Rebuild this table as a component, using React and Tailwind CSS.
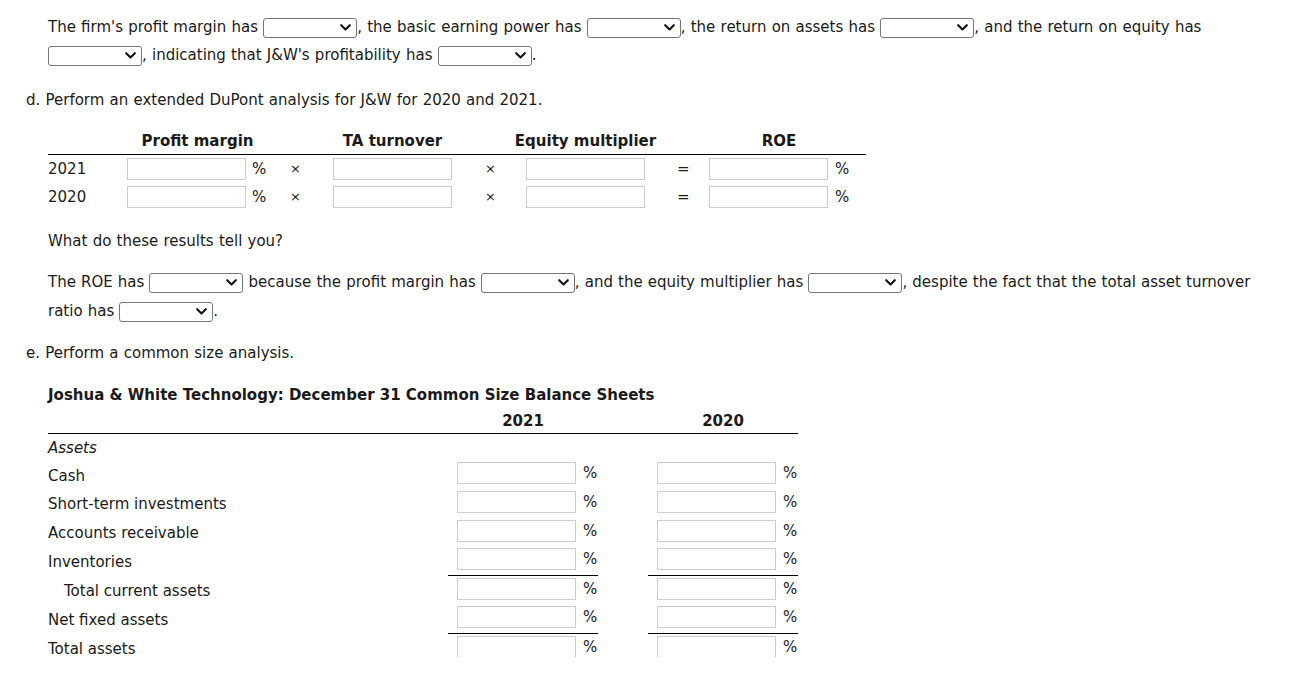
import React from 'react';

function Select() {
  return (
    <span className="inline-flex align-middle items-center justify-end w-[94px] h-[20px] pr-[5px] border border-[#767676] rounded-[3px] bg-white">
      <svg width="11" height="7" viewBox="0 0 11 7" fill="none">
        <path d="M1.2 1.2 L5.5 5.5 L9.8 1.2" stroke="#111" strokeWidth="2.1" strokeLinecap="round" strokeLinejoin="round" />
      </svg>
    </span>
  );
}

function Box() {
  return <input type="text" readOnly className="block w-[119px] h-[22px] border border-[#cccccc] bg-white outline-none" />;
}

const rows = [
  { label: 'Cash', pt: 'pt-[3px]', lpt: 'pt-[6px] leading-[22px]', h: 'h-[29px]' },
  { label: 'Short-term investments', pt: 'pt-[3px]', lpt: 'pt-[5px] leading-[22px]', h: 'h-[29px]' },
  { label: 'Accounts receivable', pt: 'pt-[3px]', lpt: 'pt-[5px] leading-[22px]', h: 'h-[29px]' },
  { label: 'Inventories', pt: 'pt-[2px]', lpt: 'pt-[5px] leading-[22px]', h: 'h-[30px]', line: true },
  { label: 'Total current assets', pt: 'pt-[2px]', lpt: 'pt-[4px] leading-[22px]', h: 'h-[28px]', indent: true },
  { label: 'Net fixed assets', pt: 'pt-[2px]', lpt: 'pt-[5px] leading-[22px]', h: 'h-[30px]', line: true },
  { label: 'Total assets', pt: 'pt-[2px]', lpt: 'pt-[8px] leading-[15px]', h: 'h-[28px]' },
];

export default function App() {
  return (
    <div className="w-[1305px] h-[657px] overflow-hidden bg-white text-[15px] text-[#1a1a1a] font-['Verdana','DejaVu_Sans',sans-serif]">
      {/* part c wrap-up */}
      <div className="pl-[48px] pt-[13px] leading-[28px] whitespace-nowrap [word-spacing:0.45px]">
        The firm's profit margin has <Select />, the basic earning power has <Select />, the return on assets has <Select />, and the return on equity has
        <br />
        <Select />, indicating that J&amp;W's profitability has <Select />.
      </div>

      <div className="pl-[26px] mt-[17px] leading-[28px] [word-spacing:0.45px]">d. Perform an extended DuPont analysis for J&amp;W for 2020 and 2021.</div>

      {/* DuPont table */}
      <div className="ml-[48px] mt-[14px] w-[818px]">
        <div className="flex items-center h-[27px] border-b border-black font-bold whitespace-nowrap">
          <div className="w-[79px]" />
          <div className="w-[141px] text-center">Profit margin</div>
          <div className="w-[65px]" />
          <div className="w-[119px] text-center">TA turnover</div>
          <div className="w-[74px]" />
          <div className="w-[119px] flex justify-center">
            <span>Equity multiplier</span>
          </div>
          <div className="w-[64px]" />
          <div className="w-[140px] text-center">ROE</div>
        </div>
        {['2021', '2020'].map((yr) => (
          <div key={yr} className="flex items-center h-[28px]">
            <div className="w-[79px]">{yr}</div>
            <Box />
            <div className="w-[30px] pl-[6px]">%</div>
            <div className="w-[57px] pl-[14px] text-[13px]">×</div>
            <Box />
            <div className="w-[74px] pl-[33px] text-[13px]">×</div>
            <Box />
            <div className="w-[64px] pl-[32px]">=</div>
            <Box />
            <div className="pl-[7px]">%</div>
          </div>
        ))}
      </div>

      <div className="pl-[48px] mt-[16px] leading-[28px] [word-spacing:0.45px]">What do these results tell you?</div>

      <div className="pl-[48px] mt-[13px] leading-[29px] whitespace-nowrap [word-spacing:0.35px]">
        The ROE has <Select /> because the profit margin has <Select />, and the equity multiplier has <Select />, despite the fact that the total asset turnover
        <br />
        ratio has <Select />.
      </div>

      <div className="pl-[26px] mt-[13px] leading-[28px] [word-spacing:0.45px]">e. Perform a common size analysis.</div>

      {/* Common size balance sheet */}
      <div className="ml-[48px] mt-[14px] w-[750px]">
        <div className="font-bold leading-[28px] whitespace-nowrap">Joshua &amp; White Technology: December 31 Common Size Balance Sheets</div>
        <div className="flex items-center h-[25px] border-b border-black font-bold">
          <div className="w-[400px]" />
          <div className="w-[150px] text-center">2021</div>
          <div className="w-[50px]" />
          <div className="w-[150px] text-center">2020</div>
        </div>
        <div className="h-[25px] pt-[3px] leading-[22px] italic">Assets</div>
        {rows.map((r) => (
          <div key={r.label} className={`flex items-start ${r.h}`}>
            <div className={`w-[400px] ${r.lpt} ${r.indent ? 'pl-[16px]' : ''}`}>{r.label}</div>
            <div className={`w-[150px] h-full flex items-start pl-[9px] ${r.pt} ${r.line ? 'border-b border-black' : ''}`}>
              <Box />
              <span className="pl-[7px] leading-[22px]">%</span>
            </div>
            <div className="w-[50px]" />
            <div className={`w-[150px] h-full flex items-start pl-[9px] ${r.pt} ${r.line ? 'border-b border-black' : ''}`}>
              <Box />
              <span className="pl-[7px] leading-[22px]">%</span>
            </div>
          </div>
        ))}
      </div>
    </div>
  );
}
